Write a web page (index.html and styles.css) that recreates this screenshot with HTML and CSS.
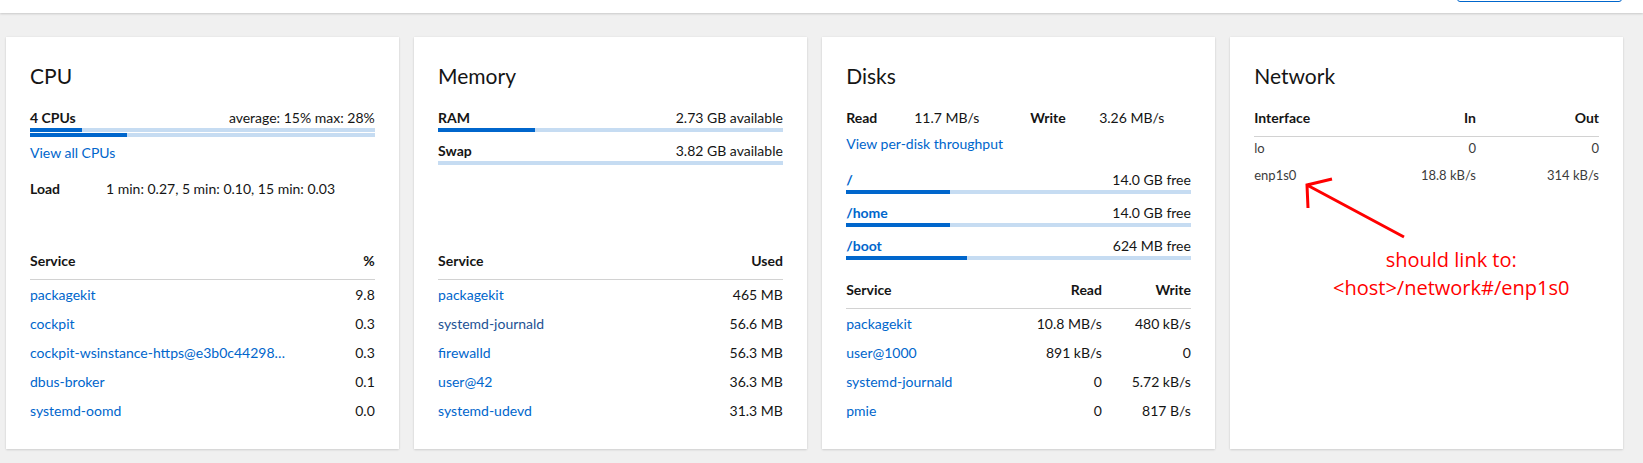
FILE: index.html
```html
<!DOCTYPE html>
<html lang="en">
<head>
<meta charset="utf-8">
<title>Overview</title>
<link rel="stylesheet" href="styles.css">
</head>
<body>
<header class="topbar"><button class="top-btn" type="button"></button></header>
<main class="cards">
  <section class="card">
    <h2 class="card-title">CPU</h2>
    <div class="usage-head"><span class="strong">4 CPUs</span><span>average: 15% max: 28%</span></div>
    <div class="bar"><div class="fill" style="width:15%"></div></div>
    <div class="bar bar-second"><div class="fill" style="width:28%"></div></div>
    <div class="link-row"><a class="link">View all CPUs</a></div>
    <div class="load"><span class="strong">Load</span><span>1 min: 0.27, 5 min: 0.10, 15 min: 0.03</span></div>
    <table class="svc">
      <colgroup><col class="col-name-wide"><col></colgroup>
      <thead><tr><th>Service</th><th class="num">%</th></tr></thead>
      <tbody>
        <tr><td class="name"><a class="link">packagekit</a></td><td class="num">9.8</td></tr>
        <tr><td class="name"><a class="link">cockpit</a></td><td class="num">0.3</td></tr>
        <tr><td class="name"><a class="link">cockpit-wsinstance-https@e3b0c44298…</a></td><td class="num">0.3</td></tr>
        <tr><td class="name"><a class="link">dbus-broker</a></td><td class="num">0.1</td></tr>
        <tr><td class="name"><a class="link">systemd-oomd</a></td><td class="num">0.0</td></tr>
      </tbody>
    </table>
  </section>

  <section class="card">
    <h2 class="card-title">Memory</h2>
    <div class="usage-head"><span class="strong">RAM</span><span>2.73 GB available</span></div>
    <div class="bar"><div class="fill" style="width:28%"></div></div>
    <div class="usage-head usage-next"><span class="strong">Swap</span><span>3.82 GB available</span></div>
    <div class="bar"><div class="fill" style="width:0%"></div></div>
    <table class="svc">
      <colgroup><col class="col-name-wide"><col></colgroup>
      <thead><tr><th>Service</th><th class="num">Used</th></tr></thead>
      <tbody>
        <tr><td class="name"><a class="link">packagekit</a></td><td class="num">465 MB</td></tr>
        <tr><td class="name"><a class="link link-visited">systemd-journald</a></td><td class="num">56.6 MB</td></tr>
        <tr><td class="name"><a class="link">firewalld</a></td><td class="num">56.3 MB</td></tr>
        <tr><td class="name"><a class="link">user@42</a></td><td class="num">36.3 MB</td></tr>
        <tr><td class="name"><a class="link">systemd-udevd</a></td><td class="num">31.3 MB</td></tr>
      </tbody>
    </table>
  </section>

  <section class="card">
    <h2 class="card-title">Disks</h2>
    <div class="rw">
      <span class="strong">Read</span><span>11.7 MB/s</span>
      <span class="strong">Write</span><span>3.26 MB/s</span>
    </div>
    <div class="link-row link-row-tight"><a class="link">View per-disk throughput</a></div>
    <div class="usage-head mount-first"><a class="link strong">/</a><span>14.0 GB free</span></div>
    <div class="bar"><div class="fill" style="width:30%"></div></div>
    <div class="usage-head usage-next"><a class="link strong">/home</a><span>14.0 GB free</span></div>
    <div class="bar"><div class="fill" style="width:30%"></div></div>
    <div class="usage-head usage-next"><a class="link strong">/boot</a><span>624 MB free</span></div>
    <div class="bar"><div class="fill" style="width:35%"></div></div>
    <table class="svc">
      <colgroup><col><col class="col-read"><col class="col-write"></colgroup>
      <thead><tr><th>Service</th><th class="num">Read</th><th class="num">Write</th></tr></thead>
      <tbody>
        <tr><td class="name"><a class="link">packagekit</a></td><td class="num">10.8 MB/s</td><td class="num">480 kB/s</td></tr>
        <tr><td class="name"><a class="link">user@1000</a></td><td class="num">891 kB/s</td><td class="num">0</td></tr>
        <tr><td class="name"><a class="link">systemd-journald</a></td><td class="num">0</td><td class="num">5.72 kB/s</td></tr>
        <tr><td class="name"><a class="link">pmie</a></td><td class="num">0</td><td class="num">817 B/s</td></tr>
      </tbody>
    </table>
  </section>

  <section class="card card-network">
    <h2 class="card-title">Network</h2>
    <table class="net">
      <colgroup><col><col class="col-in"><col class="col-out"></colgroup>
      <thead><tr><th>Interface</th><th class="num">In</th><th class="num">Out</th></tr></thead>
      <tbody>
        <tr><td>lo</td><td class="num">0</td><td class="num">0</td></tr>
        <tr><td>enp1s0</td><td class="num">18.8 kB/s</td><td class="num">314 kB/s</td></tr>
      </tbody>
    </table>
    <svg class="arrow" width="393" height="412" viewBox="0 0 393 412" aria-hidden="true">
      <path d="M174 200 L77 148 M102 142 L77 148 L78 171" fill="none" stroke="#ff0000" stroke-width="3"/>
    </svg>
    <div class="note">should link to:<br>&lt;host&gt;/network#/enp1s0</div>
  </section>
</main>
</body>
</html>
```

FILE: styles.css
```css
html, body {
  margin: 0;
  padding: 0;
}

body {
  background: #f0f0f0;
  font-family: Lato, "Liberation Sans", sans-serif;
  font-size: 14px;
  line-height: 21px;
  color: #151515;
  width: 1643px;
  height: 463px;
  overflow: hidden;
}

.topbar {
  position: relative;
  z-index: 1;
  height: 13px;
  background: #ffffff;
  display: flex;
  justify-content: flex-end;
  align-items: flex-end;
  overflow: hidden;
  box-shadow: 0 1px 2px rgba(0, 0, 0, 0.16);
}

.top-btn {
  flex: none;
  width: 165px;
  height: 36px;
  margin: 0 21px 11px 0;
  border: 1px solid #0066cc;
  border-radius: 3px;
  background: #ffffff;
}

.cards {
  display: grid;
  grid-template-columns: repeat(4, 1fr);
  column-gap: 15.33px;
  padding: 24px 20px 0 6px;
}

.card {
  box-sizing: border-box;
  min-height: 412px;
  background: #ffffff;
  padding: 24px;
  display: flex;
  flex-direction: column;
  box-shadow: 0 1px 2px rgba(0, 0, 0, 0.12), 0 0 2px rgba(0, 0, 0, 0.06);
}

.card-network {
  position: relative;
}

.card-title {
  margin: 0 0 16px;
  font-size: 21px;
  line-height: 30px;
  font-weight: 400;
  color: #151515;
}

.strong {
  font-weight: 700;
}

.usage-head {
  display: flex;
  justify-content: space-between;
}

.usage-next {
  margin-top: 8px;
}

.bar {
  height: 4px;
  background: #c6dcf2;
}

.bar-second {
  margin-top: 1px;
}

.fill {
  height: 100%;
  background: #0066cc;
}

.link {
  color: #0066cc;
  text-decoration: none;
  cursor: pointer;
}

.link-visited {
  color: #1d5294;
}

.link-row {
  margin-top: 5px;
}

.link-row-tight {
  margin-top: 5px;
}

.load {
  margin-top: 15px;
  display: grid;
  grid-template-columns: 76px 1fr;
}

.rw {
  display: grid;
  grid-template-columns: 68px 116px 69px 1fr;
}

.mount-first {
  margin-top: 15px;
}

.svc {
  margin-top: auto;
  width: 100%;
  border-collapse: collapse;
  table-layout: fixed;
}

.svc th,
.net th {
  font-weight: 700;
  text-align: left;
  padding: 0 0 8px;
  border-bottom: 1px solid #d2d2d2;
}

.svc td {
  padding: 4px 0 4px;
}

.svc .name {
  white-space: nowrap;
  overflow: hidden;
  text-overflow: ellipsis;
}

.svc th.num,
.svc td.num,
.net th.num,
.net td.num {
  text-align: right;
}

.col-name-wide {
  width: 268px;
}

.col-read {
  width: 100px;
}

.col-write {
  width: 89px;
}

.net {
  width: 100%;
  border-collapse: collapse;
  table-layout: fixed;
}

.net th {
  padding-bottom: 8px;
}

.net td {
  font-size: 13px;
  line-height: 19px;
  padding: 2px 0 6px;
  color: #3c3c3c;
}

.col-in {
  width: 110px;
}

.col-out {
  width: 123px;
}

.arrow {
  position: absolute;
  left: 0;
  top: 0;
  pointer-events: none;
}

.note {
  position: absolute;
  left: 100px;
  top: 209px;
  width: 242px;
  text-align: center;
  white-space: nowrap;
  font-family: "Open Sans", "Noto Sans", sans-serif;
  font-size: 20px;
  line-height: 28px;
  color: #ff0000;
}
```
